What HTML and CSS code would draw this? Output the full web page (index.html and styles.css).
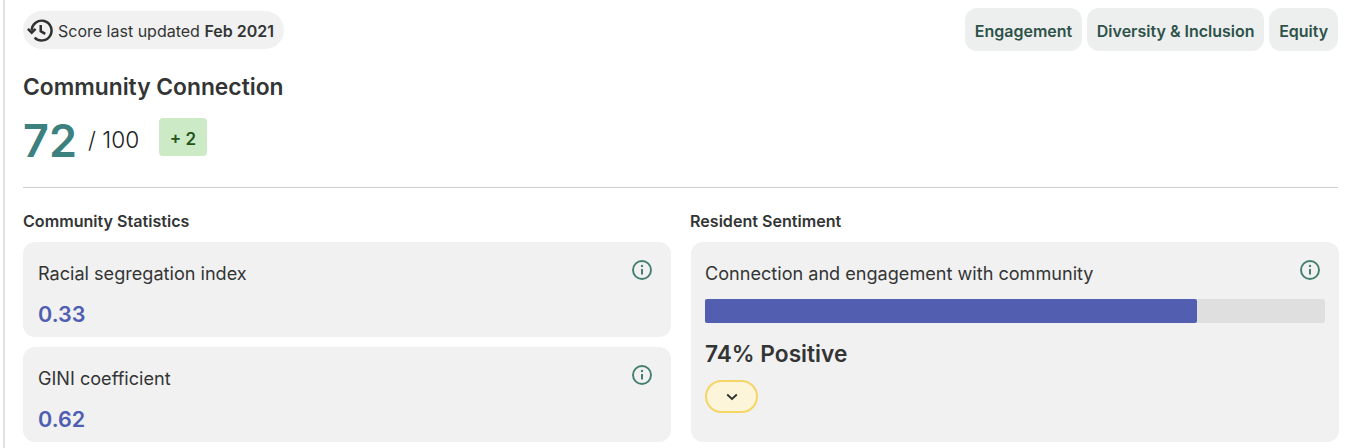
FILE: index.html
```html
<!DOCTYPE html>
<html lang="en">
<head>
    <meta charset="UTF-8">
    <meta name="viewport" content="width=device-width, initial-scale=1.0">
    <title>Community Connection</title>
    <link rel="stylesheet" href="styles.css">
</head>
<body>
    <div class="panel">
        <div class="top-row">
            <div class="updated">
                <svg class="history-icon" viewBox="0 0 24 24" width="27" height="27" fill="none" stroke="#2f3131" stroke-width="2.2">
                    <path d="M4.2 12a8.8 8.8 0 1 1 2.6 6.3"/>
                    <path d="M0.8 10.6 L4.2 14 L7.6 10.6" stroke-linejoin="miter"/>
                    <path d="M12.2 7.2 V12.6 L16.2 15"/>
                </svg>
                <span>Score last updated <b>Feb 2021</b></span>
            </div>
            <div class="tabs">
                <a class="tab">Engagement</a>
                <a class="tab">Diversity &amp; Inclusion</a>
                <a class="tab">Equity</a>
            </div>
        </div>

        <h2 class="title">Community Connection</h2>
        <div class="score-row">
            <span class="score">72</span>
            <span class="out-of">/ 100</span>
            <span class="change">+ 2</span>
        </div>

        <hr class="divider">

        <div class="columns">
            <div class="column">
                <h3>Community Statistics</h3>
                <div class="card stat">
                    <div class="card-head">
                        <span>Racial segregation index</span>
                        <svg class="info" viewBox="0 0 20 20" width="20" height="20" fill="none">
                            <circle cx="10" cy="10" r="9" stroke="#437f70" stroke-width="1.9"/>
                            <circle cx="10" cy="6" r="1.2" fill="#437f70"/>
                            <path d="M10 9v5.5" stroke="#437f70" stroke-width="2"/>
                        </svg>
                    </div>
                    <div class="value">0.33</div>
                </div>
                <div class="card stat">
                    <div class="card-head">
                        <span>GINI coefficient</span>
                        <svg class="info" viewBox="0 0 20 20" width="20" height="20" fill="none">
                            <circle cx="10" cy="10" r="9" stroke="#437f70" stroke-width="1.9"/>
                            <circle cx="10" cy="6" r="1.2" fill="#437f70"/>
                            <path d="M10 9v5.5" stroke="#437f70" stroke-width="2"/>
                        </svg>
                    </div>
                    <div class="value">0.62</div>
                </div>
            </div>
            <div class="column">
                <h3 class="sentiment-title">Resident Sentiment</h3>
                <div class="card sentiment">
                    <div class="card-head">
                        <span>Connection and engagement with community</span>
                        <svg class="info" viewBox="0 0 20 20" width="20" height="20" fill="none">
                            <circle cx="10" cy="10" r="9" stroke="#437f70" stroke-width="1.9"/>
                            <circle cx="10" cy="6" r="1.2" fill="#437f70"/>
                            <path d="M10 9v5.5" stroke="#437f70" stroke-width="2"/>
                        </svg>
                    </div>
                    <div class="bar"><div class="bar-fill" style="width: 79.4%"></div></div>
                    <div class="positive">74% Positive</div>
                    <button class="expand">
                        <svg viewBox="0 0 12 8" width="12" height="8" fill="none" stroke="#2f3131" stroke-width="1.8">
                            <path d="M1.2 1.5 L6 6 L10.8 1.5"/>
                        </svg>
                    </button>
                </div>
            </div>
        </div>
    </div>
</body>
</html>
```

FILE: styles.css
```css
body {
    font-family: Inter, "Liberation Sans", sans-serif;
    margin: 0;
    background-color: white;
    color: #333535;
    overflow: hidden;
}
.panel {
    margin-left: 3px;
    border-left: 2px solid #e2e2e2;
    height: 448px;
    box-sizing: border-box;
    padding: 8px 12px 0 18px;
}
.top-row {
    display: flex;
    justify-content: space-between;
    align-items: flex-start;
}
.updated {
    display: flex;
    align-items: center;
    gap: 4px;
    height: 38px;
    margin-top: 3px;
    padding: 1px 10px 0 4px;
    box-sizing: border-box;
    border-radius: 19px;
    background-color: #f1f1f1;
    font-size: 16px;
}
.updated b {
    font-weight: 600;
}
.tabs {
    display: flex;
    gap: 5px;
}
.tab {
    display: flex;
    align-items: center;
    box-sizing: border-box;
    height: 43px;
    padding: 2px 9.8px 0;
    border-radius: 12px;
    background-color: #edefee;
    color: #2d5249;
    font-size: 16px;
    font-weight: 600;
}
.title {
    margin: 21px 0 0;
    font-size: 22.8px;
    line-height: 30px;
    font-weight: 600;
}
.score-row {
    display: flex;
    align-items: center;
    height: 50px;
    margin-top: 10px;
}
.score {
    color: #3d8080;
    font-size: 45px;
    font-weight: 600;
    width: 65px;
    padding-top: 7px;
}
.out-of {
    font-size: 22.7px;
    font-weight: 300;
    color: #222;
    width: 71px;
    padding-top: 5px;
}
.change {
    display: flex;
    align-items: center;
    justify-content: center;
    box-sizing: border-box;
    width: 48px;
    height: 38px;
    padding-top: 3px;
    border-radius: 4px;
    background-color: #cbeac5;
    color: #22541c;
    font-size: 17px;
    font-weight: 600;
}
.divider {
    border: none;
    border-top: 1px solid #cfcfcf;
    margin: 25px 0 0;
}
.columns {
    display: grid;
    grid-template-columns: 648px 648px;
    gap: 20px;
}
.column h3 {
    margin: 23px 0 11px;
    font-size: 16.1px;
    line-height: 20px;
    font-weight: 600;
}
.column .sentiment-title {
    margin-left: -1px;
}
.card {
    box-sizing: border-box;
    background-color: #f1f1f1;
    border-radius: 12px;
    padding: 19px 14px 0 15px;
}
.stat {
    height: 95px;
    margin-bottom: 10px;
}
.sentiment {
    height: 200px;
    padding-left: 14px;
}
.card-head {
    display: flex;
    justify-content: space-between;
    align-items: flex-start;
    font-size: 18.1px;
    line-height: 24px;
}
.info {
    margin: -1px 5px 0 0;
}
.value {
    margin-top: 14px;
    color: #4f5eb1;
    font-size: 21.6px;
    line-height: 30px;
    font-weight: 600;
}
.bar {
    height: 24px;
    margin-top: 14px;
    border-radius: 2px;
    background-color: #dfdfdf;
}
.bar-fill {
    height: 100%;
    border-radius: 2px;
    background-color: #525eb0;
}
.positive {
    margin-top: 15px;
    font-size: 22.7px;
    line-height: 32px;
    font-weight: 600;
}
.expand {
    display: flex;
    align-items: center;
    justify-content: center;
    width: 53px;
    height: 33px;
    margin-top: 10px;
    padding: 0;
    border: 2.5px solid #f4d566;
    border-radius: 17px;
    background-color: #fdf5d9;
}
```
